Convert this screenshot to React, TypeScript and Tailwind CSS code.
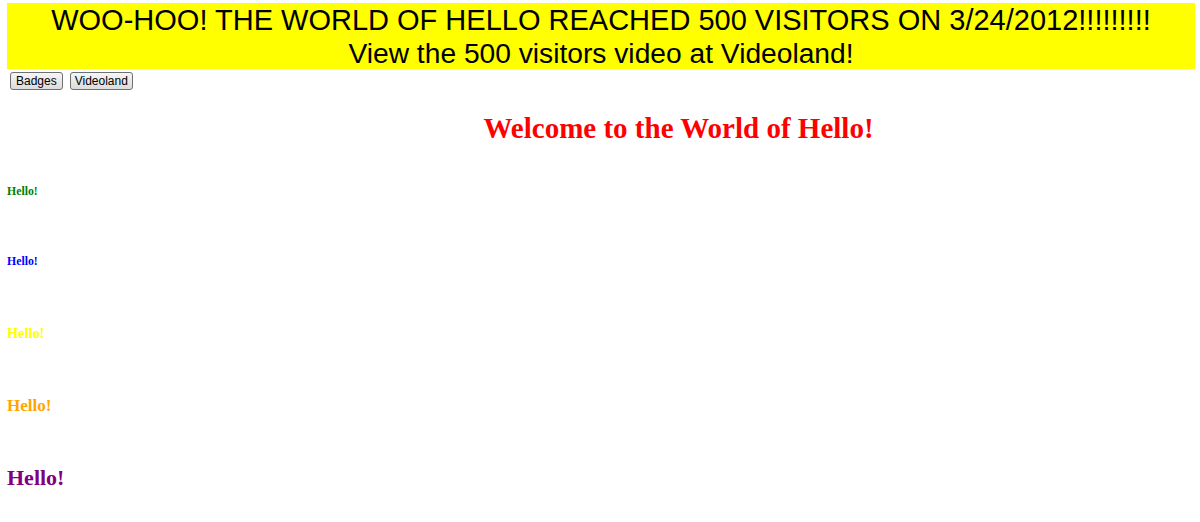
import React from "react";

export default function App() {
  return (
    <div className="min-h-[522px] bg-white pt-[3px] pl-[7px] pr-[5px]" style={{ fontFamily: '"Liberation Serif", serif' }}>
      <div className="bg-[#ffff00] text-black text-center h-[66px] pt-[1px]" style={{ fontFamily: '"Liberation Sans", Arial, sans-serif' }}>
        <div className="text-[29px] leading-[33px]">WOO-HOO! THE WORLD OF HELLO REACHED 500 VISITORS ON 3/24/2012!!!!!!!!!</div>
        <div className="text-[28.2px] leading-[32px]">View the 500 visitors video at Videoland!</div>
      </div>
      <div className="flex gap-[7px] mt-[3px] ml-[3px]" style={{ fontFamily: '"Liberation Sans", Arial, sans-serif' }}>
        <button className="h-[18px] px-[5px] text-[12px] leading-[16px] text-black border border-[#707070] rounded-[3px] bg-gradient-to-b from-[#f6f6f6] to-[#dcdcdc]">Badges</button>
        <button className="h-[18px] px-[4px] text-[12px] leading-[16px] text-black border border-[#707070] rounded-[3px] bg-gradient-to-b from-[#f6f6f6] to-[#dcdcdc]">Videoland</button>
      </div>
      <div className="pl-[155px] text-center mt-[20px] text-[29px] leading-[36px] font-bold text-[#ff0000]">
        Welcome to the World of Hello!
      </div>
      <div className="mt-[38px] text-[11.8px] leading-[14px] font-bold text-[#008000]">Hello!</div>
      <div className="mt-[56px] text-[11.8px] leading-[14px] font-bold text-[#0000ff]">Hello!</div>
      <div className="mt-[57px] text-[14.3px] leading-[16px] font-bold text-[#ffff00]">Hello!</div>
      <div className="mt-[55px] text-[17px] leading-[20px] font-bold text-[#ffa500]">Hello!</div>
      <div className="mt-[49px] text-[22px] leading-[26px] font-bold text-[#800080]">Hello!</div>
    </div>
  );
}
